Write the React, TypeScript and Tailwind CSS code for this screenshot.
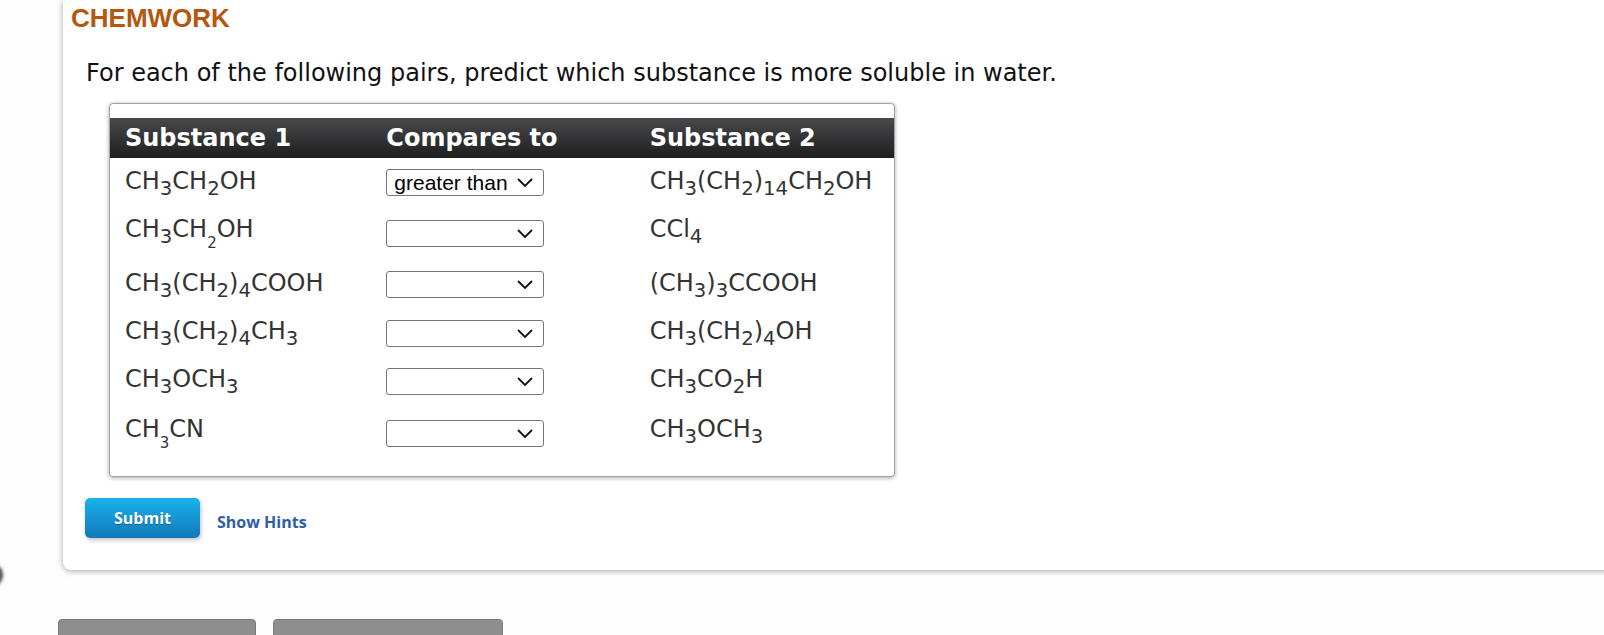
import { ReactNode } from 'react';

// digit set slightly below the baseline, as the page renders most formula indices
function D({ children }: { children: ReactNode }) {
  return <span className="relative top-[6px] text-[0.82em]">{children}</span>;
}

// a real <sub>-style index: smaller and lower
function Sub({ children }: { children: ReactNode }) {
  return <span className="relative top-[11px] text-[15px]">{children}</span>;
}

interface Row {
  left: ReactNode;
  right: ReactNode;
  value: string;
  height: string;
  pad: string;
}

const rows: Row[] = [
  {
    left: <>CH<D>3</D>CH<D>2</D>OH</>,
    right: <>CH<D>3</D>(CH<D>2</D>)<D>14</D>CH<D>2</D>OH</>,
    value: 'greater than',
    height: 'h-[51px]',
    pad: 'pt-[10px]',
  },
  {
    left: <>CH<D>3</D>CH<Sub>2</Sub>OH</>,
    right: <>CCl<D>4</D></>,
    value: '',
    height: 'h-[51px]',
    pad: 'pt-[7px]',
  },
  {
    left: <>CH<D>3</D>(CH<D>2</D>)<D>4</D>COOH</>,
    right: <>(CH<D>3</D>)<D>3</D>CCOOH</>,
    value: '',
    height: 'h-[49px]',
    pad: 'pt-[10px]',
  },
  {
    left: <>CH<D>3</D>(CH<D>2</D>)<D>4</D>CH<D>3</D></>,
    right: <>CH<D>3</D>(CH<D>2</D>)<D>4</D>OH</>,
    value: '',
    height: 'h-[48px]',
    pad: 'pt-[9px]',
  },
  {
    left: <>CH<D>3</D>OCH<D>3</D></>,
    right: <>CH<D>3</D>CO<D>2</D>H</>,
    value: '',
    height: 'h-[52px]',
    pad: 'pt-[9px]',
  },
  {
    left: <>CH<Sub>3</Sub>CN</>,
    right: <>CH<D>3</D>OCH<D>3</D></>,
    value: '',
    height: 'h-[50px]',
    pad: 'pt-[7px]',
  },
];

function CompareSelect({ value }: { value: string }) {
  return (
    <div className="relative mt-[11px] w-[158px] h-[27px]">
      <select
        defaultValue={value}
        className="appearance-none w-full h-full bg-white border border-[#767676] rounded-[3px] pl-[7px] pr-[28px] text-[21px] leading-[25px] text-black font-['Liberation_Sans',Arial,sans-serif] outline-none"
      >
        <option value=""></option>
        <option value="greater than">greater than</option>
        <option value="less than">less than</option>
        <option value="equal to">equal to</option>
      </select>
      <svg
        className="absolute right-[10px] top-[8px] w-[18px] h-[11px] pointer-events-none"
        viewBox="0 0 18 11"
        fill="none"
      >
        <path d="M2 2l7 7 7-7" stroke="#111" strokeWidth="1.8" />
      </svg>
    </div>
  );
}

export default function App() {
  return (
    <div className="relative w-[1604px] h-[635px] overflow-hidden bg-[#fdfdfd] font-['DejaVu_Sans',Verdana,sans-serif]">
      {/* round control peeking in from the left edge */}
      <div className="absolute left-[-21px] top-[563px] w-[24px] h-[24px] rounded-full bg-[#555] blur-[1.5px]" />

      <div className="ml-[63px] w-[1580px] bg-white rounded-bl-[8px] shadow-[0_1px_6px_rgba(0,0,0,0.35)] pl-[8px] pt-[3px] pb-[32px]">
        <div className="text-[26px] leading-[30px] font-bold text-[#b5570e] font-['Liberation_Sans',Arial,sans-serif]">
          CHEMWORK
        </div>

        <p className="mt-[26px] ml-[15px] text-[24px] leading-[28px] text-[#111] whitespace-nowrap">
          For each of the following pairs, predict which substance is more soluble in water.
        </p>

        <div className="mt-[16px] ml-[38px] w-[786px] border border-[#a3a3a3] rounded-[4px] shadow-[0_1px_4px_rgba(0,0,0,0.35)] bg-white pt-[14px] pb-[17px]">
          <div className="grid grid-cols-3 h-[40px] items-center bg-gradient-to-b from-[#48494c] to-[#1f1f1f] text-white text-[24px] font-bold">
            <div className="px-[15px]">Substance 1</div>
            <div className="px-[15px]">Compares to</div>
            <div className="pl-[17px]">Substance 2</div>
          </div>

          {rows.map((r, i) => (
            <div key={i} className={`grid grid-cols-3 items-start ${r.height}`}>
              <div className={`px-[15px] text-[24px] leading-[27px] text-[#333] whitespace-nowrap ${r.pad}`}>{r.left}</div>
              <div className="px-[15px]">
                <CompareSelect value={r.value} />
              </div>
              <div className={`pl-[17px] text-[24px] leading-[27px] text-[#333] whitespace-nowrap ${r.pad}`}>{r.right}</div>
            </div>
          ))}
        </div>

        <div className="mt-[21px] ml-[14px] flex items-center gap-[17px] font-['Open_Sans',sans-serif] font-bold text-[16px]">
          <button className="w-[115px] h-[40px] rounded-[5px] bg-gradient-to-b from-[#18b2ee] to-[#1479b7] text-white shadow-[1px_2px_4px_rgba(0,0,0,0.25)] [text-shadow:0_1px_1px_rgba(0,0,0,0.3)]">
            Submit
          </button>
          <span className="mt-[7px] text-[#2f5ea6] cursor-pointer">Show Hints</span>
        </div>
      </div>

      <div className="ml-[58px] mt-[49px] flex gap-[17px]">
        <div className="w-[198px] h-[30px] rounded-t-[4px] bg-[#8e8e8e] border border-[#7b7b7b]" />
        <div className="w-[230px] h-[30px] rounded-t-[4px] bg-[#8e8e8e] border border-[#7b7b7b]" />
      </div>
    </div>
  );
}
